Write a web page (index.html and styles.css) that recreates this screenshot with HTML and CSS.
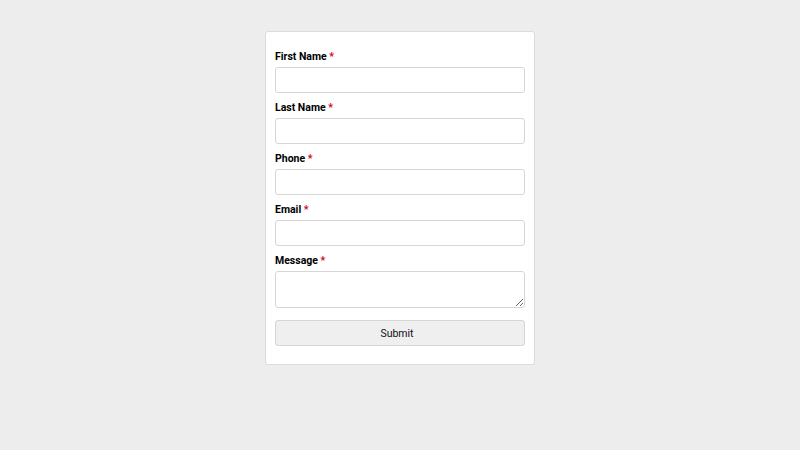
FILE: index.html
```html
<!DOCTYPE html>
<html lang="en">
<head>
<meta charset="utf-8">
<title>Contact</title>
<link rel="stylesheet" href="styles.css">
</head>
<body>
<form class="card">
  <div class="field">
    <label class="label" for="first">First Name <span class="req">*</span></label>
    <input class="input" id="first" type="text">
  </div>
  <div class="field">
    <label class="label" for="last">Last Name <span class="req">*</span></label>
    <input class="input" id="last" type="text">
  </div>
  <div class="field">
    <label class="label" for="phone">Phone <span class="req">*</span></label>
    <input class="input" id="phone" type="tel">
  </div>
  <div class="field">
    <label class="label" for="email">Email <span class="req">*</span></label>
    <input class="input" id="email" type="email">
  </div>
  <div class="field">
    <label class="label" for="msg">Message <span class="req">*</span></label>
    <textarea class="input textarea" id="msg"></textarea>
  </div>
  <button class="submit" type="button">Submit</button>
</form>
</body>
</html>
```
FILE: styles.css
```css
html, body {
  margin: 0;
  background: #ededed;
  font-family: Roboto, "Liberation Sans", Arial, sans-serif;
}

body {
  display: flex;
  justify-content: center;
  align-items: flex-start;
  padding-top: 31px;
  min-height: 450px;
  box-sizing: border-box;
}

.card {
  width: 270px;
  box-sizing: border-box;
  background: #fff;
  border: 1px solid #dcdcdc;
  border-radius: 3px;
  padding: 18px 9px 18px;
  display: flex;
  flex-direction: column;
}

.field {
  display: flex;
  flex-direction: column;
  margin-bottom: 8px;
}

.label {
  font-size: 10.5px;
  font-weight: bold;
  line-height: 14px;
  color: #000;
  margin-bottom: 3px;
}

.req {
  color: #d0021b;
}

.input {
  display: block;
  width: 100%;
  height: 26px;
  box-sizing: border-box;
  border: 1px solid #d6d6d6;
  border-radius: 3px;
  background: #fff;
  padding: 4px 6px;
  font: 10px Roboto, "Liberation Sans", Arial, sans-serif;
  margin: 0;
}

.textarea {
  height: 37px;
  resize: vertical;
}

.field:last-of-type {
  margin-bottom: 12px;
}

.submit {
  width: 100%;
  height: 26px;
  box-sizing: border-box;
  background: #efefef;
  border: 1px solid #d6d6d6;
  border-radius: 3px;
  font: 10.5px Roboto, "Liberation Sans", Arial, sans-serif;
  color: #111;
  padding: 0 6px 0 0;
}
```
